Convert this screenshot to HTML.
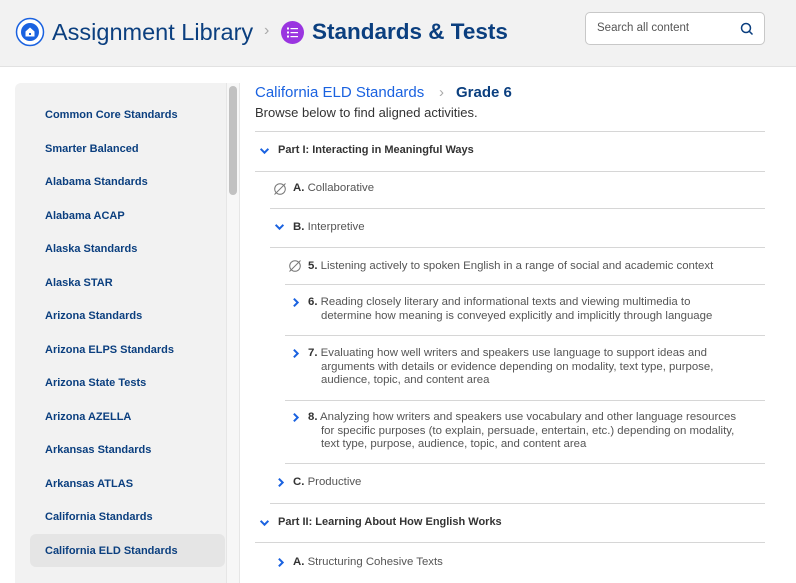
<!DOCTYPE html><html><head><style>
*{margin:0;padding:0;box-sizing:border-box}
body{width:796px;height:580px;overflow:hidden;background:#fff;font-family:"Liberation Sans",sans-serif;position:relative}
.a{position:absolute}
#hd{left:0;top:0;width:796px;height:67px;background:#f2f2f2;border-bottom:1px solid #e2e2e2}
.nav{left:45px;font-size:11px;color:#0b3f7f;font-weight:bold;white-space:nowrap}
.ln{position:absolute;height:1px;background:#d6d6d6;right:31px}
.t{position:absolute;font-size:11.4px;color:#555;line-height:13.5px;white-space:nowrap}
.t b{color:#333}
.t span{display:block;padding-left:13px}
.h{font-size:11px;font-weight:bold;color:#333}
.chev{position:absolute}
</style></head><body>
<div id="hd" class="a"></div>
<svg class="a" style="left:15px;top:17px" width="30" height="30" viewBox="0 0 30 30"><circle cx="15" cy="15" r="13.5" fill="#fff" stroke="#1a62e0" stroke-width="1.5"/><circle cx="15" cy="15" r="9" fill="#1a62e0"/><path d="M10.5 14.5L15 10.5L19.5 14.5V19.5H10.5Z" fill="#fff"/><rect x="14" y="16" width="2" height="2" fill="#1a62e0"/></svg>
<div class="a" style="left:52px;top:19px;font-size:23.5px;color:#0b3f7f">Assignment Library</div>
<div class="a" style="left:264px;top:22px;font-size:16px;color:#aaa">›</div>
<svg class="a" style="left:281px;top:21px" width="23" height="23" viewBox="0 0 23 23"><circle cx="11.5" cy="11.5" r="11.5" fill="#9a35e0"/><g fill="#fff"><rect x="6" y="6.5" width="2" height="2"/><rect x="6" y="10.5" width="2" height="2"/><rect x="6" y="14.5" width="2" height="2"/><rect x="9.5" y="7" width="7.5" height="1.2"/><rect x="9.5" y="11" width="7.5" height="1.2"/><rect x="9.5" y="15" width="7.5" height="1.2"/></g></svg>
<div class="a" style="left:312px;top:19px;font-size:22.5px;font-weight:bold;color:#0b3f7f">Standards &amp; Tests</div>
<div class="a" style="left:585px;top:12px;width:180px;height:33px;background:#fff;border:1px solid #c8c8c8;border-radius:5px"></div>
<div class="a" style="left:597px;top:22px;font-size:11.5px;color:#555">Search all content</div>
<svg class="a" style="left:740px;top:22px" width="14" height="14" viewBox="0 0 14 14"><circle cx="6" cy="6" r="4.5" fill="none" stroke="#0b3f7f" stroke-width="1.5"/><path d="M9.3 9.3L12.5 12.5" stroke="#0b3f7f" stroke-width="1.5"/></svg>

<div class="a" style="left:15px;top:83px;width:212px;height:500px;background:#f2f2f2;border-radius:6px 0 0 0"></div>
<div class="a" style="left:226px;top:83px;width:14px;height:500px;background:#f7f7f7;border-left:1px solid #e6e6e6;border-right:1px solid #e6e6e6"></div>
<div class="a" style="left:229px;top:86px;width:8px;height:109px;background:#c1c1c1;border-radius:4px"></div>
<div class="a" style="left:30px;top:534px;width:195px;height:33px;background:#e5e5e5;border-radius:6px"></div>
<div class="a nav" style="top:109px">Common Core Standards</div>
<div class="a nav" style="top:143px">Smarter Balanced</div>
<div class="a nav" style="top:176px">Alabama Standards</div>
<div class="a nav" style="top:210px">Alabama ACAP</div>
<div class="a nav" style="top:243px">Alaska Standards</div>
<div class="a nav" style="top:277px">Alaska STAR</div>
<div class="a nav" style="top:310px">Arizona Standards</div>
<div class="a nav" style="top:344px">Arizona ELPS Standards</div>
<div class="a nav" style="top:377px">Arizona State Tests</div>
<div class="a nav" style="top:411px">Arizona AZELLA</div>
<div class="a nav" style="top:444px">Arkansas Standards</div>
<div class="a nav" style="top:478px">Arkansas ATLAS</div>
<div class="a nav" style="top:511px">California Standards</div>
<div class="a nav" style="top:545px">California ELD Standards</div>

<div class="a" style="left:255px;top:84px;font-size:15px;color:#1a62e0">California ELD Standards</div>
<div class="a" style="left:439px;top:84px;font-size:15px;color:#aaa">›</div>
<div class="a" style="left:456px;top:84px;font-size:15px;font-weight:bold;color:#0b3f7f">Grade 6</div>
<div class="a" style="left:255px;top:105px;font-size:13px;color:#333">Browse below to find aligned activities.</div>

<div class="ln" style="left:255px;top:131px"></div>
<div class="ln" style="left:255px;top:171px"></div>
<div class="ln" style="left:270px;top:208px"></div>
<div class="ln" style="left:270px;top:247px"></div>
<div class="ln" style="left:285px;top:284px"></div>
<div class="ln" style="left:285px;top:335px"></div>
<div class="ln" style="left:285px;top:400px"></div>
<div class="ln" style="left:285px;top:463px"></div>
<div class="ln" style="left:270px;top:503px"></div>
<div class="ln" style="left:255px;top:542px"></div>

<svg width="0" height="0"><defs>
<symbol id="dn" viewBox="0 0 10 10"><path d="M1.5 3.5L5 7L8.5 3.5" fill="none" stroke="#1a62e0" stroke-width="1.8"/></symbol>
<symbol id="rt" viewBox="0 0 10 10"><path d="M3.5 1.5L7 5L3.5 8.5" fill="none" stroke="#1a62e0" stroke-width="1.8"/></symbol>
<symbol id="no" viewBox="0 0 14 14"><circle cx="7" cy="7" r="5.3" fill="none" stroke="#777" stroke-width="1"/><path d="M1.5 12.5L12.5 1.5" stroke="#777" stroke-width="1"/></symbol>
</defs></svg>

<svg class="chev" style="left:259px;top:145px" width="11" height="11"><use href="#dn"/></svg>
<div class="t h" style="left:278px;top:144px">Part I: Interacting in Meaningful Ways</div>
<svg class="chev" style="left:273px;top:182px" width="14" height="14"><use href="#no"/></svg>
<div class="t" style="left:293px;top:182px"><b>A.</b> Collaborative</div>
<svg class="chev" style="left:274px;top:221px" width="11" height="11"><use href="#dn"/></svg>
<div class="t" style="left:293px;top:221px"><b>B.</b> Interpretive</div>
<svg class="chev" style="left:288px;top:259px" width="14" height="14"><use href="#no"/></svg>
<div class="t" style="left:308px;top:260px"><b>5.</b> Listening actively to spoken English in a range of social and academic context</div>
<svg class="chev" style="left:290px;top:297px" width="11" height="11"><use href="#rt"/></svg>
<div class="t" style="left:308px;top:296px"><b>6.</b> Reading closely literary and informational texts and viewing multimedia to<span>determine how meaning is conveyed explicitly and implicitly through language</span></div>
<svg class="chev" style="left:290px;top:348px" width="11" height="11"><use href="#rt"/></svg>
<div class="t" style="left:308px;top:347px"><b>7.</b> Evaluating how well writers and speakers use language to support ideas and<span>arguments with details or evidence depending on modality, text type, purpose,</span><span>audience, topic, and content area</span></div>
<svg class="chev" style="left:290px;top:412px" width="11" height="11"><use href="#rt"/></svg>
<div class="t" style="left:308px;top:411px"><b>8.</b> Analyzing how writers and speakers use vocabulary and other language resources<span>for specific purposes (to explain, persuade, entertain, etc.) depending on modality,</span><span>text type, purpose, audience, topic, and content area</span></div>
<svg class="chev" style="left:275px;top:477px" width="11" height="11"><use href="#rt"/></svg>
<div class="t" style="left:293px;top:476px"><b>C.</b> Productive</div>
<svg class="chev" style="left:259px;top:517px" width="11" height="11"><use href="#dn"/></svg>
<div class="t h" style="left:278px;top:516px">Part II: Learning About How English Works</div>
<svg class="chev" style="left:275px;top:557px" width="11" height="11"><use href="#rt"/></svg>
<div class="t" style="left:293px;top:556px"><b>A.</b> Structuring Cohesive Texts</div>
</body></html>
